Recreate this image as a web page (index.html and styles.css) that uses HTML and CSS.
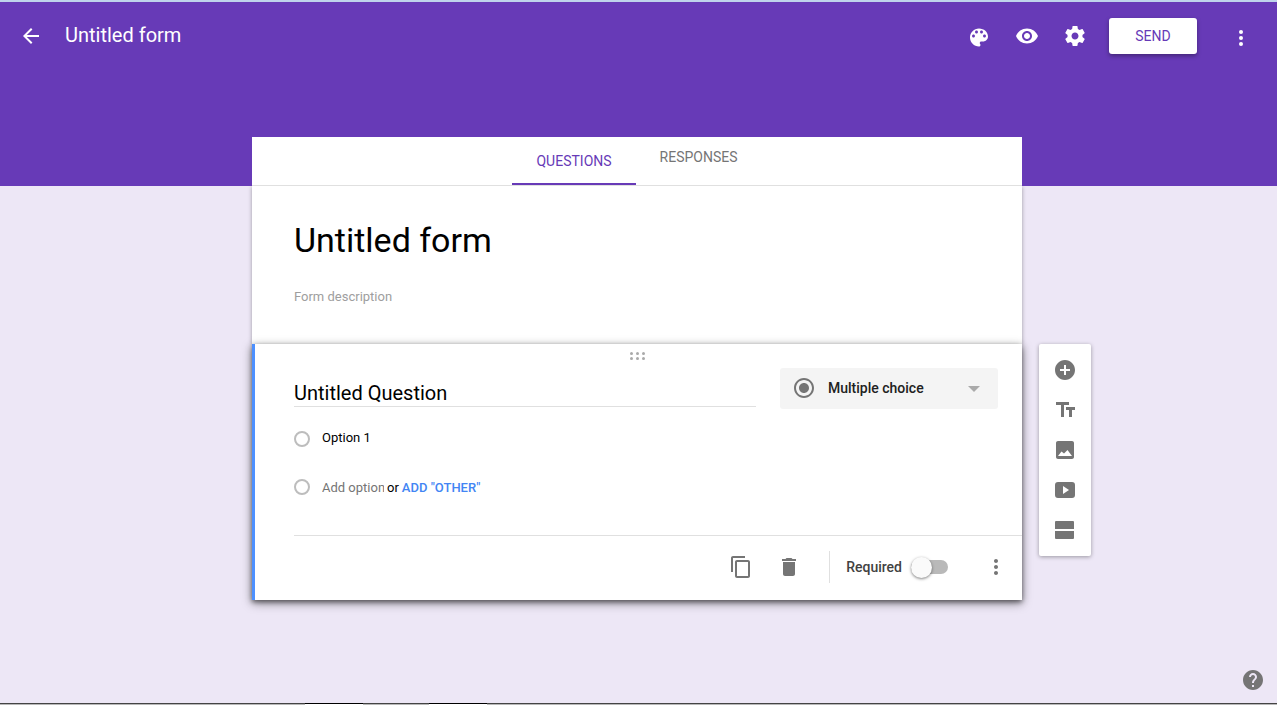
FILE: index.html
```html
<!DOCTYPE html>
<html lang="en">
<head>
<meta charset="utf-8">
<meta name="viewport" content="width=device-width, initial-scale=1">
<title>Untitled form</title>
<link rel="stylesheet" href="styles.css">
</head>
<body>
<header class="banner">
  <div class="appbar">
    <button class="icon-btn" type="button" aria-label="Back"><svg class="icon" viewBox="0 0 24 24"><path d="M20 11H7.83l5.59-5.59L12 4l-8 8 8 8 1.41-1.41L7.83 13H20v-2z"/></svg></button>
    <h1 class="appbar-title">Untitled form</h1>
    <div class="appbar-actions">
      <button class="icon-btn" type="button" aria-label="Color palette"><svg class="icon" viewBox="0 0 24 24"><path d="M12 4.500c-4.970 0-9 4.030-9 9s4.030 9 9 9c.83 0 1.500-.67 1.500-1.500 0-.39-.15-.74-.39-1.010-.23-.26-.38-.61-.38-.99 0-.83.67-1.500 1.500-1.500H16c2.760 0 5-2.240 5-5 0-4.420-4.030-8-9-8zm-5.500 9c-.83 0-1.500-.67-1.500-1.500s.67-1.500 1.500-1.500S8 11.170 8 12s-.67 1.500-1.500 1.500zm3-4C8.670 9.500 8 8.830 8 8s.67-1.500 1.500-1.500S11 7.170 11 8s-.67 1.500-1.500 1.500zm5 0c-.83 0-1.500-.67-1.500-1.500s.67-1.500 1.500-1.500S16 7.170 16 8s-.67 1.500-1.500 1.500zm3 4c-.83 0-1.500-.67-1.500-1.500s.67-1.500 1.500-1.500 1.500.67 1.500 1.500-.67 1.500-1.500 1.500z"/></svg></button>
      <button class="icon-btn" type="button" aria-label="Preview"><svg class="icon" viewBox="0 0 24 24"><path d="M12 4.500C7 4.500 2.730 7.610 1 12c1.730 4.390 6 7.500 11 7.500s9.270-3.110 11-7.500c-1.730-4.390-6-7.500-11-7.500zM12 17c-2.760 0-5-2.240-5-5s2.240-5 5-5 5 2.240 5 5-2.240 5-5 5zm0-8c-1.660 0-3 1.340-3 3s1.340 3 3 3 3-1.340 3-3-1.340-3-3-3z"/></svg></button>
      <button class="icon-btn" type="button" aria-label="Settings"><svg class="icon" viewBox="0 0 24 24"><path d="M19.430 12.980c.04-.32.07-.64.07-.98s-.03-.66-.07-.98l2.110-1.650c.19-.15.24-.42.12-.64l-2-3.460c-.12-.22-.39-.3-.61-.22l-2.490 1c-.52-.4-1.080-.73-1.690-.98l-.38-2.650C14.460 2.180 14.250 2 14 2h-4c-.25 0-.46.18-.49.42l-.38 2.650c-.61.25-1.170.59-1.690.98l-2.490-1c-.23-.09-.49 0-.61.22l-2 3.460c-.13.22-.07.49.12.64l2.110 1.650c-.04.32-.07.65-.07.98s.03.66.07.98l-2.110 1.650c-.19.15-.24.42-.12.64l2 3.460c.12.22.39.3.61.22l2.490-1c.52.4 1.080.73 1.690.98l.38 2.650c.03.24.24.42.49.42h4c.25 0 .46-.18.49-.42l.38-2.650c.61-.25 1.170-.59 1.690-.98l2.490 1c.23.09.49 0 .61-.22l2-3.460c.12-.22.07-.49-.12-.64l-2.110-1.650zM12 15.500c-1.930 0-3.500-1.570-3.500-3.500s1.570-3.500 3.500-3.500 3.500 1.570 3.500 3.500-1.570 3.500-3.500 3.500z"/></svg></button>
    </div>
    <button class="send" type="button">SEND</button>
    <button class="icon-btn" type="button" aria-label="More"><svg class="icon" viewBox="0 0 24 24"><circle cx="12" cy="8" r="2"/><circle cx="12" cy="14" r="2"/><circle cx="12" cy="20" r="2"/></svg></button>
  </div>
  <div class="columns">
    <nav class="tabs">
      <a class="tab tab-active" href="#questions">QUESTIONS</a>
      <a class="tab" href="#responses">RESPONSES</a>
    </nav>
  </div>
</header>

<main class="columns workspace">
  <div class="form" id="questions">
    <section class="card intro">
      <input class="field form-title" type="text" value="Untitled form" aria-label="Form title">
      <input class="field form-desc" type="text" placeholder="Form description" aria-label="Form description">
    </section>
    <section class="card question">
      <div class="grip"><svg width="15" height="8" viewBox="0 0 15 8"><circle cx="1.500" cy="1.500" r="1.500"/><circle cx="7.500" cy="1.500" r="1.500"/><circle cx="13.500" cy="1.500" r="1.500"/><circle cx="1.500" cy="6.500" r="1.500"/><circle cx="7.500" cy="6.500" r="1.500"/><circle cx="13.500" cy="6.500" r="1.500"/></svg></div>
      <div class="question-head">
        <input class="field question-title" type="text" value="Untitled Question" aria-label="Question">
        <div class="type">
          <select class="type-select" aria-label="Question type"><option>Multiple choice</option></select>
          <svg class="icon type-icon" viewBox="0 0 24 24"><path d="M12 7c-2.760 0-5 2.240-5 5s2.240 5 5 5 5-2.240 5-5-2.240-5-5-5zm0-5C6.480 2 2 6.480 2 12s4.480 10 10 10 10-4.480 10-10S17.520 2 12 2zm0 18c-4.420 0-8-3.580-8-8s3.580-8 8-8 8 3.580 8 8-3.580 8-8 8z"/></svg>
          <svg class="type-arrow" width="12" height="6" viewBox="0 0 12 6"><path d="M0 0h12L6 6z"/></svg>
        </div>
      </div>
      <div class="options">
        <div class="option">
          <input class="radio" type="radio" name="answer" aria-label="Option 1">
          <input class="field option-text" type="text" value="Option 1" aria-label="Option text">
        </div>
        <div class="option">
          <input class="radio" type="radio" name="answer" aria-label="New option">
          <div class="add">
            <input class="field add-text" type="text" placeholder="Add option" aria-label="Add option">
            <span>or</span>
            <button class="add-other" type="button">ADD "OTHER"</button>
          </div>
        </div>
      </div>
      <div class="question-foot">
        <button class="icon-btn" type="button" aria-label="Duplicate"><svg class="icon" viewBox="0 0 24 24"><path d="M16 1H4c-1.100 0-2 .9-2 2v14h2V3h12V1zm3 4H8c-1.100 0-2 .9-2 2v14c0 1.100.9 2 2 2h11c1.100 0 2-.9 2-2V7c0-1.100-.9-2-2-2zm0 16H8V7h11v14z"/></svg></button>
        <button class="icon-btn" type="button" aria-label="Delete"><svg class="icon" viewBox="0 0 24 24"><path d="M6 19c0 1.100.9 2 2 2h8c1.100 0 2-.9 2-2V7H6v12zM19 4h-3.500l-1-1h-5l-1 1H5v2h14V4z"/></svg></button>
        <label class="required">Required<input class="switch" type="checkbox"></label>
        <button class="icon-btn" type="button" aria-label="More options"><svg class="icon" viewBox="0 0 24 24"><path d="M12 8c1.100 0 2-.9 2-2s-.9-2-2-2-2 .9-2 2 .9 2 2 2zm0 2c-1.100 0-2 .9-2 2s.9 2 2 2 2-.9 2-2-.9-2-2-2zm0 6c-1.100 0-2 .9-2 2s.9 2 2 2 2-.9 2-2-.9-2-2-2z"/></svg></button>
      </div>
    </section>
  </div>
  <aside class="tools">
    <button class="icon-btn" type="button" aria-label="Add question"><svg class="icon" viewBox="0 0 24 24"><path d="M12 2C6.480 2 2 6.480 2 12s4.480 10 10 10 10-4.480 10-10S17.520 2 12 2zm5 11h-4v4h-2v-4H7v-2h4V7h2v4h4v2z"/></svg></button>
    <button class="icon-btn" type="button" aria-label="Add title"><svg class="icon" viewBox="0 0 24 24"><path d="M3 4h13v3h-5v12H8V7H3zM13 9h9v3h-3v7h-3v-7h-3z"/></svg></button>
    <button class="icon-btn" type="button" aria-label="Add image"><svg class="icon" viewBox="0 0 24 24"><path d="M21 19V5c0-1.100-.9-2-2-2H5c-1.100 0-2 .9-2 2v14c0 1.100.9 2 2 2h14c1.100 0 2-.9 2-2zM5 18l3.500-4.500 2.500 2 3.500-3.500 4.500 6z"/></svg></button>
    <button class="icon-btn" type="button" aria-label="Add video"><svg class="icon" viewBox="0 0 24 24"><path d="M5 4h14c2 0 3 1 3 3v10c0 2-1 3-3 3H5c-2 0-3-1-3-3V7c0-2 1-3 3-3zm5 4v8l6-4z"/></svg></button>
    <button class="icon-btn" type="button" aria-label="Add section"><svg class="icon" viewBox="0 0 24 24"><path d="M3 3h17a1 1 0 0 1 1 1v7H2V4a1 1 0 0 1 1-1zM2 13h19v7a1 1 0 0 1-1 1H3a1 1 0 0 1-1-1z"/></svg></button>
  </aside>
</main>

<footer class="footer">
  <div class="help"><button class="icon-btn" type="button" aria-label="Help"><svg class="icon" viewBox="0 0 24 24"><path d="M12 2C6.480 2 2 6.480 2 12s4.480 10 10 10 10-4.480 10-10S17.520 2 12 2zm1 17h-2v-2h2v2zm2.070-7.750l-.9.92C13.450 12.900 13 13.500 13 15h-2v-.5c0-1.100.45-2.100 1.170-2.830l1.240-1.260c.37-.36.59-.86.59-1.410 0-1.100-.9-2-2-2s-2 .9-2 2H8c0-2.210 1.790-4 4-4s4 1.790 4 4c0 .88-.36 1.680-.93 2.250z"/></svg></button></div>
  <div class="edge"><span class="edge-item"></span><span class="edge-item"></span></div>
</footer>
</body>
</html>
```
FILE: styles.css
```css
* { box-sizing: border-box; }

body {
  margin: 0;
  min-height: 100vh;
  display: flex;
  flex-direction: column;
  background: #ede7f6;
  color: #000;
  font-family: Roboto, "Liberation Sans", sans-serif;
  font-size: 13px;
}

button, input, select { font: inherit; color: inherit; margin: 0; }
button { border: 0; padding: 0; background: none; cursor: pointer; }

.icon { display: block; width: 24px; height: 24px; fill: currentColor; }
.icon-btn { flex: none; color: #757575; }

.field {
  display: block;
  min-width: 0;
  width: 100%;
  padding: 0;
  border: 0;
  outline: 0;
  background: none;
}

/* Banner */
.banner {
  display: flex;
  flex-direction: column;
  gap: 79px;
  background: #673ab7;
  border-top: 2px solid #bfd3ec;
}
.appbar {
  display: flex;
  align-items: center;
  padding: 16px 24px 4px 19px;
  color: #fff;
}
.appbar .icon-btn { color: #fff; }
.appbar-title {
  flex: 1;
  margin: 0 0 0 22px;
  padding-bottom: 2px;
  font-size: 20px;
  line-height: 24px;
  font-weight: 400;
}
.appbar-actions { display: flex; gap: 24px; }
.send {
  width: 88px;
  height: 36px;
  margin: 0 32px 0 22px;
  border-radius: 3px;
  background: #fff;
  box-shadow: 0 2px 4px rgba(0, 0, 0, .35);
  color: #673ab7;
  font-size: 14px;
}

.columns {
  display: grid;
  grid-template-columns: 1fr minmax(0, 770px) 1fr;
  padding-right: 3px;
}
.tabs {
  grid-column: 2;
  display: flex;
  justify-content: center;
  background: #fff;
  border-bottom: 1px solid #e0e0e0;
  font-size: 14px;
}
.tab {
  height: 48px;
  padding: 0 24px;
  line-height: 40px;
  color: #757575;
  text-decoration: none;
}
.tab-active {
  line-height: 48px;
  color: #673ab7;
  border-bottom: 2px solid #673ab7;
}

/* Cards */
.workspace { flex: 1; align-items: start; }
.form { grid-column: 2; }
.card { background: #fff; }
.intro {
  padding: 34px 42px;
  box-shadow: 0 1px 4px rgba(0, 0, 0, .35);
  clip-path: inset(0 -8px -8px -8px);
}
.form-title { font-size: 34px; line-height: 40px; height: 40px; }
.form-desc { height: 20px; margin-top: 26px; margin-bottom: 4px; }
.form-desc::placeholder { color: #9e9e9e; opacity: 1; }

.question {
  position: relative;
  padding-left: 39px;
  border-left: 3px solid #4d90fe;
  box-shadow: 0 3px 10px rgba(0, 0, 0, .4), 0 2px 5px rgba(0, 0, 0, .5);
}
.grip {
  display: flex;
  justify-content: center;
  height: 24px;
  padding: 8px 42px 0 0;
  fill: #aaa;
}
.question-head {
  display: flex;
  align-items: flex-start;
  gap: 24px;
  padding-right: 24px;
}
.question-title {
  flex: 1;
  height: 39px;
  padding-top: 12px;
  border-bottom: 1px solid #e0e0e0;
  font-size: 20px;
}
.type { position: relative; flex: 0 1 218px; }
.type-select {
  display: block;
  width: 100%;
  height: 41px;
  padding: 0 40px 2px 48px;
  border: 0;
  border-radius: 3px;
  background: #f4f4f4;
  appearance: none;
  color: #212121;
  font-size: 14px;
  font-weight: 500;
}
.type-icon, .type-arrow { position: absolute; pointer-events: none; }
.type-icon { left: 12px; top: 8px; color: #757575; }
.type-arrow { right: 18px; top: 18px; fill: #aaa; }

.options { padding: 18px 24px 36px 0; }
.option { display: flex; align-items: center; gap: 12px; height: 24px; }
.option + .option { margin-top: 24px; }
.option-text { padding-bottom: 3px; }
.radio {
  flex: none;
  width: 16px;
  height: 16px;
  border: 2px solid #bdbdbd;
  border-radius: 50%;
  appearance: none;
}
.add { display: flex; align-items: center; gap: 3px; }
.add-text { width: 62px; }
.add-text::placeholder { color: #757575; opacity: 1; }
.add-other { color: #4285f4; font-weight: 500; }

.question-foot {
  display: flex;
  align-items: center;
  justify-content: flex-end;
  gap: 24px;
  height: 65px;
  padding: 0 14px 2px 0;
  border-top: 1px solid #e0e0e0;
}
.required {
  display: flex;
  align-items: center;
  gap: 9px;
  height: 32px;
  margin: 0 12px 0 4px;
  padding-left: 16px;
  border-left: 1px solid #e0e0e0;
  color: #424242;
  font-size: 14px;
  font-weight: 500;
}
.switch {
  position: relative;
  width: 37px;
  height: 14px;
  border-radius: 7px;
  background: #b9b9b9;
  appearance: none;
}
.switch::before {
  content: "";
  position: absolute;
  left: 0;
  top: -3px;
  width: 21px;
  height: 21px;
  border-radius: 50%;
  background: #fafafa;
  box-shadow: 0 1px 3px rgba(0, 0, 0, .5);
}

/* Side tools */
.tools {
  display: flex;
  flex-direction: column;
  gap: 16px;
  width: 52px;
  margin: 158px 0 0 17px;
  padding: 14px;
  border-radius: 2px;
  background: #fff;
  box-shadow: 0 1px 4px rgba(0, 0, 0, .35);
}

/* Footer */
.help { display: flex; justify-content: flex-end; padding: 0 12px 11px; }
.edge {
  display: flex;
  gap: 66px;
  height: 2px;
  padding-left: 305px;
  border-top: 1px solid #444;
  background: #b8b8b8;
}
.edge-item { width: 58px; height: 1px; background: #fff; box-shadow: 0 -1px #000; }
```
